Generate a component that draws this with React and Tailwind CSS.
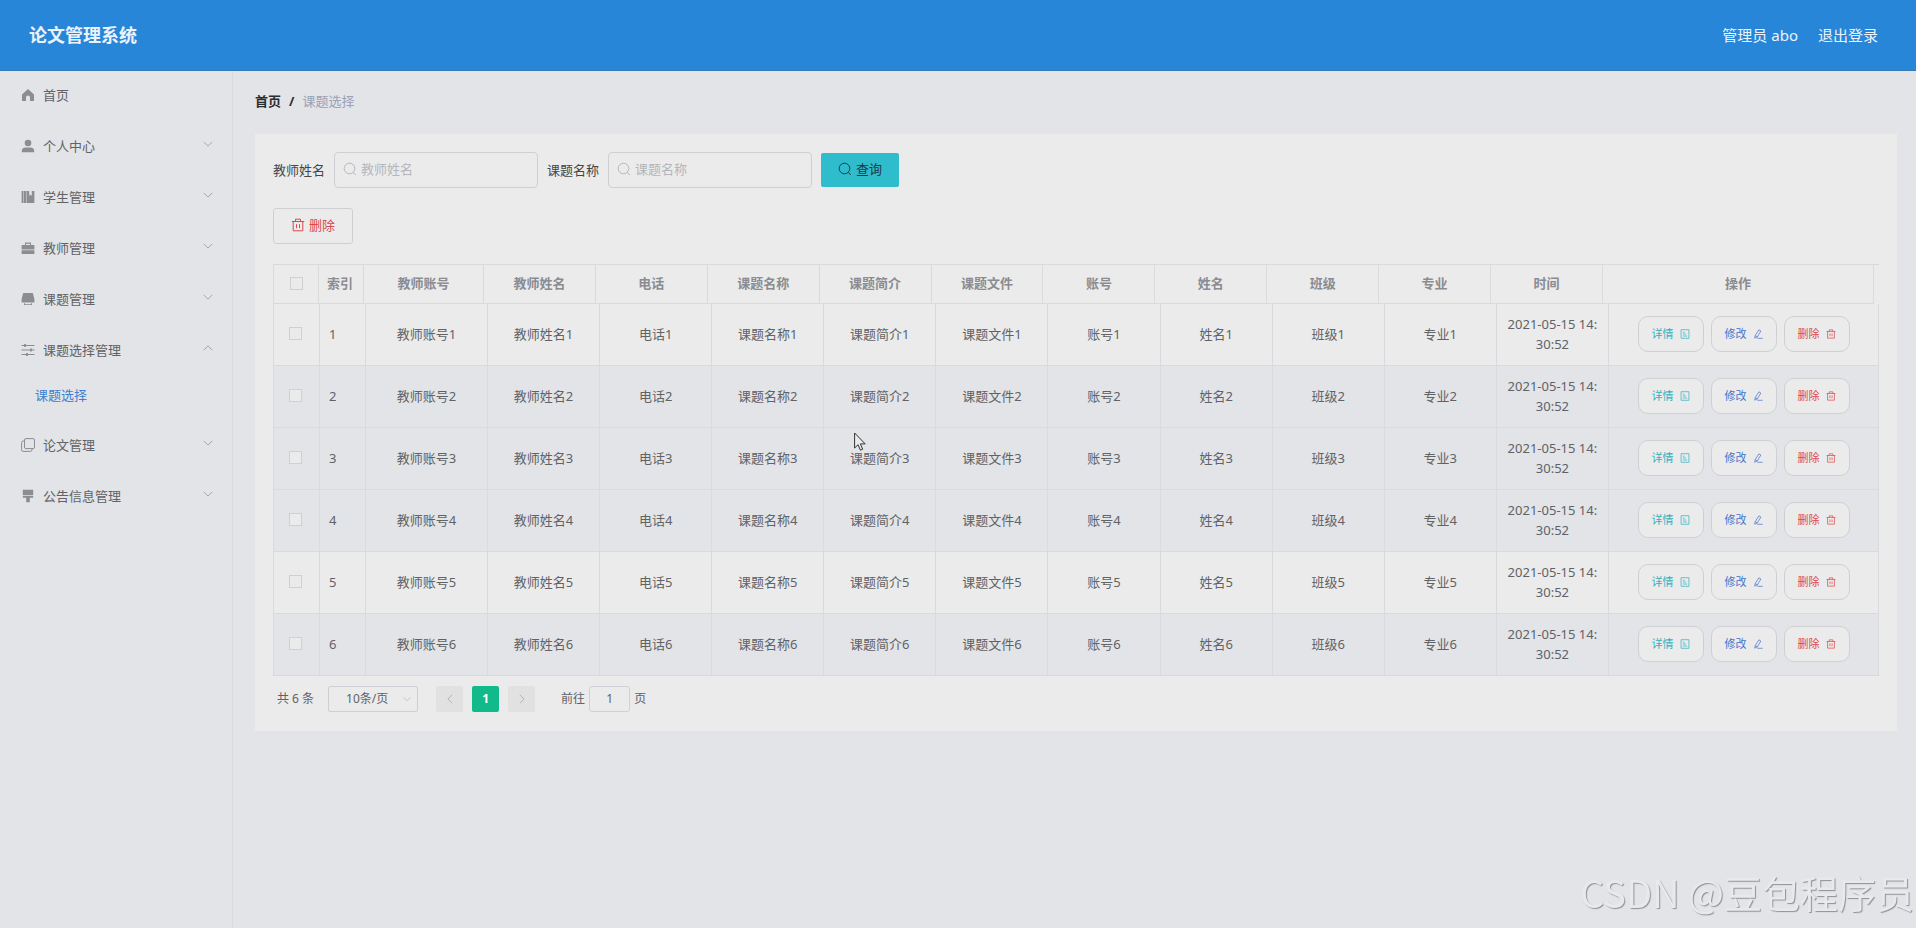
import { useState } from "react";

const Icono = ({ className = "size-3.5", relleno = false, children }) => (
  <svg
    viewBox="0 0 14 14"
    className={`${className} shrink-0`}
    fill={relleno ? "currentColor" : "none"}
    stroke={relleno ? "none" : "currentColor"}
    aria-hidden="true"
  >
    {children}
  </svg>
);

const IconoCasa = () => (
  <Icono relleno>
    <path d="M7 1 13 6.6V13H9V9.4a2 2 0 0 0-4 0V13H1V6.6z" />
  </Icono>
);

const IconoUsuario = () => (
  <Icono relleno>
    <circle cx="7" cy="4" r="3.3" />
    <path d="M.8 13.2v-1.4C.8 9.6 2.6 8.4 4.500 8.400h5c1.900 0 3.700 1.200 3.700 3.400v1.400z" />
  </Icono>
);

const IconoLibros = () => (
  <Icono relleno>
    <path d="M.6 1h1.900v12H.6zM3 1h2.300v12H3zM5.800 1h2.400v4.800l1.300-1 1.300 1V1h2.600v12H5.800z" />
  </Icono>
);

const IconoMaletin = () => (
  <Icono relleno>
    <path d="M4 4V1.500h6V4h3.400v4.600H.6V4zm1-1.300V4h4V2.700zM.6 9.300h12.800V13H.6z" />
  </Icono>
);

const IconoImpresora = () => (
  <Icono relleno>
    <path d="M2.200 1h9.600l1.600 6v3.500H.6V7zM3 11.200h1v1h6v-1h1V13H3z" />
  </Icono>
);

const IconoAjustes = () => (
  <Icono>
    <path d="M.5 2.500h13M.5 7h13M.5 11.500h13" />
    <path d="M4 1v3M10 5.500v3M6 10v3" strokeWidth="1.800" />
  </Icono>
);

const IconoCopia = () => (
  <Icono>
    <rect x="3.500" y=".6" width="10" height="10" rx="1.500" />
    <path d="M3.500 3H2.200Q.6 3 .6 4.600v7.200q0 1.600 1.600 1.600h7.200q1.600 0 1.600-1.600v-1.200" />
  </Icono>
);

const IconoBrocha = () => (
  <Icono relleno>
    <path d="M1.800.8h10.400v5.400H1.800zM1.800 7h10.400v1.800H8.800v4.400H5.200V8.800H1.800z" />
  </Icono>
);

const IconoBuscar = ({ className }) => (
  <Icono className={className}>
    <circle cx="6.500" cy="6.500" r="5.300" />
    <path d="m10.200 10.400 2.600 2.600" />
  </Icono>
);

const IconoBasura = ({ className }) => (
  <Icono className={className}>
    <path d="M.8 3.500h12.400M4.500 3.500V1.200h5v2.300M2.200 3.500v9.300h9.600V3.500M5.500 6.200v3.900M8.500 6.200v3.900" />
  </Icono>
);

const IconoDocumento = ({ className }) => (
  <Icono className={className}>
    <path d="M1.500 1h11v12h-11zM4 4.500h2.500M4 7h4.500M4 9.800h6" />
  </Icono>
);

const IconoLapiz = ({ className }) => (
  <Icono className={className}>
    <path d="M8.200 1.200 11 2.800 6 11.200l-3.600 1.600.6-3.400zM3.200 9.400 6 11M6 13h7.500" />
  </Icono>
);

const Flecha = ({ className, d = "m2 4.500 5 5 5-5" }) => (
  <Icono className={className}>
    <path d={d} />
  </Icono>
);

const menu = [
  { nombre: "首页", Icon: IconoCasa },
  { nombre: "个人中心", Icon: IconoUsuario, hijos: [] },
  { nombre: "学生管理", Icon: IconoLibros, hijos: [] },
  { nombre: "教师管理", Icon: IconoMaletin, hijos: [] },
  { nombre: "课题管理", Icon: IconoImpresora, hijos: [] },
  { nombre: "课题选择管理", Icon: IconoAjustes, hijos: ["课题选择"] },
  { nombre: "论文管理", Icon: IconoCopia, hijos: [] },
  { nombre: "公告信息管理", Icon: IconoBrocha, hijos: [] },
];

const columnas = [
  "教师账号",
  "教师姓名",
  "电话",
  "课题名称",
  "课题简介",
  "课题文件",
  "账号",
  "姓名",
  "班级",
  "专业",
];

const filas = [1, 2, 3, 4, 5, 6];

const Sidebar = () => {
  const [abierto, setAbierto] = useState("课题选择管理");

  return (
    <nav className="w-[233px] shrink-0 border-r border-[#d9dadd] text-[#606266]">
      <ul className="-mt-0.5">
        {menu.map(({ nombre, Icon, hijos }) => (
          <li key={nombre}>
            <button
              type="button"
              className="flex h-[51px] w-full items-center gap-2 pl-[21px] pr-[18px]"
              onClick={() => setAbierto(abierto === nombre ? "" : nombre)}
            >
              <span className="text-[#8b8d91]"><Icon /></span>
              <span>{nombre}</span>
              {hijos && (
                <Flecha
                  className="mb-1 ml-auto size-3 text-[#9a9ca0]"
                  d={abierto === nombre ? "m2 9.500 5-5 5 5" : undefined}
                />
              )}
            </button>
            {abierto === nombre && hijos?.map((hijo) => (
              <a key={hijo} href="#" className="mb-1 flex h-10 items-center pl-[35px] text-[#3d80d0]">
                {hijo}
              </a>
            ))}
          </li>
        ))}
      </ul>
    </nav>
  );
};

const Campo = ({ id, label }) => (
  <div className="flex items-center gap-[9px]">
    <label htmlFor={id} className="text-[#444649]">{label}</label>
    <div className="relative">
      <IconoBuscar className="absolute left-[9px] top-2.5 size-3.5 text-[#b4b6bb]" />
      <input
        id={id}
        type="text"
        placeholder={label}
        className="block h-9 w-[204px] rounded border border-[#cfd0d4] pb-0.5 pl-[26px] pr-3 placeholder:text-[#b4b6bb]"
      />
    </div>
  </div>
);

const Casilla = ({ label }) => (
  <input
    type="checkbox"
    aria-label={label}
    className="block mx-auto size-[13px] appearance-none border border-[#cfd0d4] bg-[#ebebeb] checked:bg-[#2a86d8]"
  />
);

const botonFila =
  "flex h-9 w-[66px] items-center justify-center gap-1.5 rounded-[10px] border border-[#cfd0d4] bg-[#ebebeb] text-[11px]";

const celda = "border-b border-r border-[#d9dadd] pb-0.5";

const Fila = ({ n }) => {
  // filas pares rayadas, la 3 tiene el cursor encima
  const fondo = n % 2 === 0 || n === 3 ? "bg-[#e3e4e7]" : "";

  return (
    <tr className={`h-[62px] ${fondo}`}>
      <td className={`${celda} pr-[3px]`}><Casilla label={`选择 ${n}`} /></td>
      <td className={`${celda} pl-[9px]`}>{n}</td>
      {columnas.map((columna) => (
        <td key={columna} className={`${celda} text-center`}>{columna}{n}</td>
      ))}
      <td className={`${celda} px-2.5 text-center break-all`}>2021-05-15 14:30:52</td>
      <td className={celda}>
        <div className="flex justify-center gap-[7px]">
          <button type="button" className={`${botonFila} text-[#2fb2c0]`}>
            详情 <IconoDocumento className="size-2.5" />
          </button>
          <button type="button" className={`${botonFila} text-[#4672cc]`}>
            修改 <IconoLapiz className="size-2.5" />
          </button>
          <button type="button" className={`${botonFila} text-[#e04848]`}>
            删除 <IconoBasura className="size-2.5" />
          </button>
        </div>
      </td>
    </tr>
  );
};

const Tabla = () => (
  <div className="mt-5 border-l border-t border-[#d9dadd] text-[#606266]">
    <div className="pr-[5px]">
      <table className="w-full table-fixed border-separate border-spacing-0">
        <thead>
          <tr className="h-[39px] text-[#8a8c91]">
            <th className={`${celda} w-[45px]`}><Casilla label="全选" /></th>
            <th className={`${celda} w-[45px] pl-2 text-left`}>索引</th>
            {columnas.map((columna, i) => (
              <th key={columna} className={`${celda} ${i === 0 ? "w-[120px]" : ""}`}>
                {columna}
              </th>
            ))}
            <th className={celda}>时间</th>
            <th className={`${celda} w-[271px]`}>操作</th>
          </tr>
        </thead>
      </table>
    </div>
    <table className="w-full table-fixed border-separate border-spacing-0">
      <colgroup>
        <col className="w-[46px]" />
        <col className="w-[46px]" />
        <col className="w-[122px]" />
        <col span={10} />
        <col className="w-[270px]" />
      </colgroup>
      <tbody>
        {filas.map((n) => <Fila key={n} n={n} />)}
      </tbody>
    </table>
  </div>
);

const Paginacion = () => (
  <div className="mt-2.5 flex h-[26px] items-center pl-1 text-xs text-[#606266]">
    <span>共 6 条</span>
    <div className="relative ml-3.5">
      <select
        aria-label="每页条数"
        className="block h-[26px] w-[90px] appearance-none rounded-xs border border-[#cfd0d4] pl-[17px]"
      >
        <option>10条/页</option>
        <option>20条/页</option>
      </select>
      <Flecha className="pointer-events-none absolute right-1.5 top-2 size-2.5 text-[#b4b6bb]" />
    </div>
    <div className="ml-[18px] flex gap-[9px]">
      <button type="button" aria-label="上一页" className="flex h-[26px] w-[27px] items-center justify-center rounded-xs bg-[#e1e1e2] text-[#a9abb0]">
        <Flecha className="size-3" d="m9.500 2-5 5 5 5" />
      </button>
      <button type="button" className="h-[26px] w-[27px] rounded-xs bg-[#12b98b] font-bold text-white">1</button>
      <button type="button" aria-label="下一页" className="flex h-[26px] w-[27px] items-center justify-center rounded-xs bg-[#e1e1e2] text-[#a9abb0]">
        <Flecha className="size-3" d="m4.500 2 5 5-5 5" />
      </button>
    </div>
    <label htmlFor="pagina" className="ml-[26px]">前往</label>
    <input
      id="pagina"
      type="text"
      defaultValue="1"
      className="mx-1 h-[26px] w-[41px] rounded-[3px] border border-[#cfd0d4] pb-0.5 text-center"
    />
    <span>页</span>
  </div>
);

const App = () => {
  return (
    <div className="flex min-h-screen flex-col bg-[#e3e4e7] text-[13px] leading-5 [font-family:'Noto_Sans','Noto_Sans_CJK_SC',sans-serif]">
      <header className="flex h-[71px] items-center justify-between border-b border-[#3a78b4] bg-[#2886d8] pl-[29px] pr-[38px] text-[#eaf3fb]">
        <h1 className="text-lg font-bold">论文管理系统</h1>
        <div className="flex gap-5 text-[15px]">
          <span>管理员 abo</span>
          <a href="#">退出登录</a>
        </div>
      </header>

      <div className="flex flex-1">
        <Sidebar />

        <main className="min-w-0 flex-1 pb-5 pl-[22px] pr-[19px] pt-5">
          <div className="flex items-center gap-2 text-[#2b2d30]">
            <a href="#" className="font-bold">首页</a>
            <span className="font-bold">/</span>
            <span className="text-[#98a2b8]">课题选择</span>
          </div>

          <section className="relative mt-[23px] bg-[#ebebeb] px-[18px] pb-[19px] pt-[18px]">
            <form className="flex items-center gap-[9px]" onSubmit={(e) => e.preventDefault()}>
              <Campo id="profesor" label="教师姓名" />
              <Campo id="tema" label="课题名称" />
              <button type="submit" className="flex h-[34px] w-[78px] items-center justify-center gap-1 rounded-xs bg-[#2fbccc] pb-0.5 text-[#1d3a40]">
                <IconoBuscar className="size-3.5" /> 查询
              </button>
            </form>

            <button type="button" className="mt-5 flex h-9 w-20 items-center justify-center gap-1 rounded-[3px] border border-[#cfd0d4] pb-0.5 text-[#d9484c]">
              <IconoBasura className="size-3.5" /> 删除
            </button>

            <Tabla />
            <Paginacion />

            <svg viewBox="0 0 12 19" className="absolute left-[599px] top-[298px] h-[19px] w-3" aria-hidden="true">
              <path d="M.6 1v15l3.500-3.300 2.300 5.500 2.300-1-2.300-5.300h4.800z" fill="#ebebeb" stroke="#333" />
            </svg>
          </section>
        </main>
      </div>

      <p className="fixed bottom-2 right-0.5 text-[38px] leading-[56px] text-[#e9e9eb] text-shadow-[1px_1px_1px_#8f9195] [font-family:'Noto_Sans_CJK_SC',sans-serif]">
        CSDN @豆包程序员
      </p>
    </div>
  );
};

export default App;
